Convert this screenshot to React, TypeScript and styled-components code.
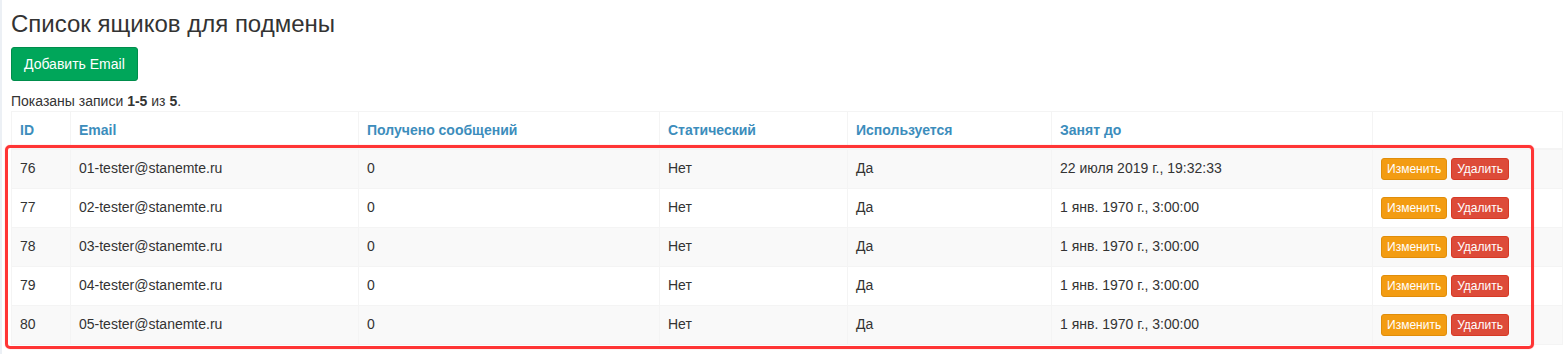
import React, { FC } from "react";
import styled, { createGlobalStyle } from "styled-components";

const GlobalStyle = createGlobalStyle`
	html, body {
		margin: 0;
		padding: 0;
		background: #ffffff;
		overflow: hidden;
	}
	body {
		font-family: "Liberation Sans", Arial, Helvetica, sans-serif;
		font-size: 14px;
		line-height: 1.42857;
		color: #333333;
	}
`;

const Page = styled.div`
	border-left: 2px solid #ecf0f5;
	padding: 11px 0 0 9px;
	min-height: 354px;
	box-sizing: border-box;
`;

const Title = styled.h1`
	margin: 0 0 10px;
	font-size: 24px;
	font-weight: 400;
	line-height: 1.1;
	color: #333333;
`;

const AddButton = styled.button`
	display: inline-block;
	height: 34px;
	padding: 6px 12px;
	font-family: inherit;
	font-size: 14px;
	line-height: 20px;
	color: #ffffff;
	background: #00a65a;
	border: 1px solid #008d4c;
	border-radius: 3px;
	cursor: pointer;
`;

const Summary = styled.div`
	margin-top: 10px;
	font-size: 14px;
	line-height: 20px;
`;

const TableWrap = styled.div`
	position: relative;
`;

const Table = styled.table`
	width: 1552px;
	table-layout: fixed;
	border-collapse: collapse;
	border-spacing: 0;
	border: 1px solid #f4f4f4;
`;

const HeadCell = styled.th<{ $w?: number }>`
	box-sizing: border-box;
	width: ${(p) => (p.$w ? `${p.$w}px` : "auto")};
	padding: 8px;
	text-align: left;
	vertical-align: bottom;
	font-weight: 700;
	line-height: 20px;
	color: #3c8dbc;
	border: 1px solid #f4f4f4;
	border-bottom-width: 2px;
`;

const Row = styled.tr<{ $striped: boolean }>`
	background: ${(p) => (p.$striped ? "#f9f9f9" : "#ffffff")};
`;

const Cell = styled.td`
	padding: 8px;
	vertical-align: top;
	line-height: 20px;
	border: 1px solid #f4f4f4;
	white-space: nowrap;
`;

const SmallButton = styled.button<{ $tone: "warning" | "danger" }>`
	display: inline-block;
	padding: 1px 5px;
	margin-right: 4px;
	font-family: inherit;
	font-size: 12px;
	line-height: 18px;
	color: #ffffff;
	border-radius: 3px;
	cursor: pointer;
	background: ${(p) => (p.$tone === "warning" ? "#f39c12" : "#dd4b39")};
	border: 1px solid ${(p) => (p.$tone === "warning" ? "#e08e0b" : "#d73925")};
	vertical-align: top;
`;

// annotation frame drawn over the body rows
const Highlight = styled.div`
	position: absolute;
	left: -6px;
	top: 34px;
	width: 1529px;
	height: 204px;
	box-sizing: border-box;
	border: 3px solid #ff3535;
	border-radius: 5px;
	box-shadow: 0 0 1px rgba(255, 53, 53, 0.6);
	pointer-events: none;
`;

type Mailbox = {
	id: number,
	email: string,
	received: number,
	isStatic: string,
	used: string,
	busyUntil: string
};

const rows: Mailbox[] = [
	{ id: 76, email: "01-tester@stanemte.ru", received: 0, isStatic: "Нет", used: "Да", busyUntil: "22 июля 2019 г., 19:32:33" },
	{ id: 77, email: "02-tester@stanemte.ru", received: 0, isStatic: "Нет", used: "Да", busyUntil: "1 янв. 1970 г., 3:00:00" },
	{ id: 78, email: "03-tester@stanemte.ru", received: 0, isStatic: "Нет", used: "Да", busyUntil: "1 янв. 1970 г., 3:00:00" },
	{ id: 79, email: "04-tester@stanemte.ru", received: 0, isStatic: "Нет", used: "Да", busyUntil: "1 янв. 1970 г., 3:00:00" },
	{ id: 80, email: "05-tester@stanemte.ru", received: 0, isStatic: "Нет", used: "Да", busyUntil: "1 янв. 1970 г., 3:00:00" }
];

const App: FC = () => {
	return (
		<>
			<GlobalStyle />
			<Page>
				<Title>Список ящиков для подмены</Title>
				<AddButton>Добавить Email</AddButton>
				<Summary>
					Показаны записи <b>1-5</b> из <b>5</b>.
				</Summary>
				<TableWrap>
					<Table>
						<thead>
							<tr>
								<HeadCell $w={59}>ID</HeadCell>
								<HeadCell $w={288}>Email</HeadCell>
								<HeadCell $w={301}>Получено сообщений</HeadCell>
								<HeadCell $w={188}>Статический</HeadCell>
								<HeadCell $w={204}>Используется</HeadCell>
								<HeadCell $w={321}>Занят до</HeadCell>
								<HeadCell>&nbsp;</HeadCell>
							</tr>
						</thead>
						<tbody>
							{rows.map((r, i) => (
								<Row key={r.id} $striped={i % 2 === 0}>
									<Cell>{r.id}</Cell>
									<Cell>{r.email}</Cell>
									<Cell>{r.received}</Cell>
									<Cell>{r.isStatic}</Cell>
									<Cell>{r.used}</Cell>
									<Cell>{r.busyUntil}</Cell>
									<Cell>
										<SmallButton $tone="warning">Изменить</SmallButton>
										<SmallButton $tone="danger">Удалить</SmallButton>
									</Cell>
								</Row>
							))}
						</tbody>
					</Table>
					<Highlight />
				</TableWrap>
			</Page>
		</>
	);
};

export default App;
